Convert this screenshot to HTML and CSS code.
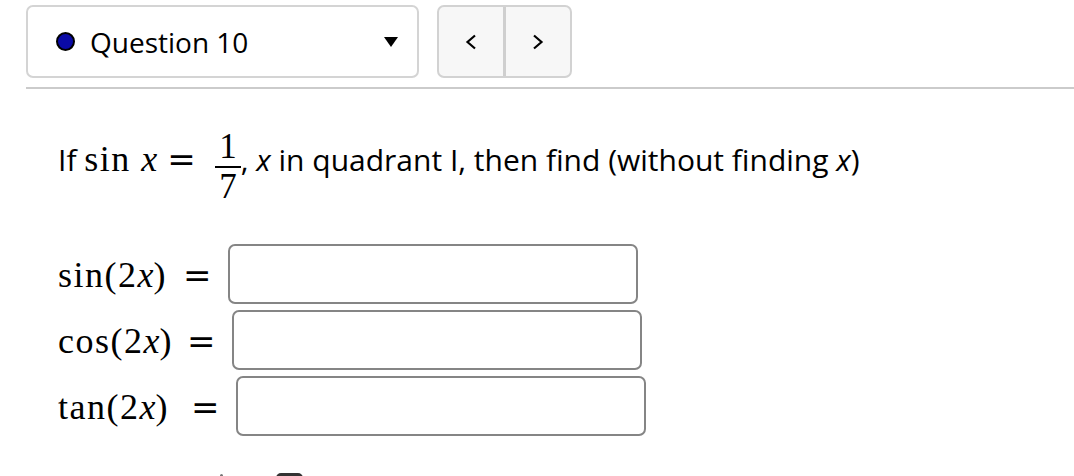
FILE: index.html
```html
<!DOCTYPE html>
<html lang="en">
<head>
<meta charset="utf-8">
<title>Question 10</title>
<link rel="stylesheet" href="styles.css">
</head>
<body>
<div class="page">
  <div class="toolbar">
    <div class="qselect">
      <span class="dot"></span>
      <span class="qlabel">Question 10</span>
      <span class="caret"></span>
    </div>
    <div class="nav">
      <span class="navbtn">
        <svg width="12" height="16" viewBox="0 0 12 16"><polyline points="10,1.5 2.5,8 10,14.5" fill="none" stroke="#000" stroke-width="2.2" stroke-linejoin="miter"/></svg>
      </span>
      <span class="navdiv"></span>
      <span class="navbtn">
        <svg width="12" height="16" viewBox="0 0 12 16"><polyline points="2,1.5 9.5,8 2,14.5" fill="none" stroke="#000" stroke-width="2.2" stroke-linejoin="miter"/></svg>
      </span>
    </div>
  </div>
  <div class="rule"></div>

  <div class="question">
    <p class="prompt">If <span class="math"><span class="mrm">sin</span> <span class="mit">x</span><span class="meq">=</span><span class="frac"><span class="num">1</span><span class="bar"></span><span class="den">7</span></span></span>, <i>x</i> in quadrant I, then find (without finding <i>x</i>)</p>

    <div class="answers">
      <div class="row">
        <span class="math lbl-sin"><span class="mrm">sin</span>(2<span class="mit">x</span>)</span>
        <span class="meq">=</span>
        <span class="box"></span>
      </div>
      <div class="row">
        <span class="math lbl-cos"><span class="mrm">cos</span>(2<span class="mit">x</span>)</span>
        <span class="meq">=</span>
        <span class="box"></span>
      </div>
      <div class="row">
        <span class="math lbl-tan"><span class="mrm">tan</span>(2<span class="mit">x</span>)</span>
        <span class="meq">=</span>
        <span class="box"></span>
      </div>
    </div>

    <div class="helprow">
      <span class="helpdot"></span>
      <span class="helpicon"></span>
    </div>
  </div>
</div>
</body>
</html>
```

FILE: styles.css
```css
html, body {
  margin: 0;
  padding: 0;
  background: #fff;
}

body {
  font-family: "Open Sans", "Noto Sans", sans-serif;
  color: #000;
  width: 1074px;
  height: 476px;
  overflow: hidden;
}

.toolbar {
  display: flex;
  gap: 18px;
  padding: 5px 0 0 26px;
}

.qselect {
  box-sizing: border-box;
  width: 393px;
  height: 73px;
  border: 2px solid #d4d4d4;
  border-radius: 7px;
  display: flex;
  align-items: center;
  padding-left: 28px;
  padding-right: 19px;
}

.dot {
  box-sizing: border-box;
  width: 19px;
  height: 19px;
  border-radius: 50%;
  background: #0a0aa6;
  border: 2px solid #000;
  flex: none;
}

.qlabel {
  margin-left: 15px;
  font-size: 28px;
  line-height: 1;
}

.caret {
  margin-left: auto;
  width: 0;
  height: 0;
  border-left: 7px solid transparent;
  border-right: 7px solid transparent;
  border-top: 10px solid #000;
}

.nav {
  box-sizing: border-box;
  width: 135px;
  height: 73px;
  border: 2px solid #d2d2d2;
  border-radius: 7px;
  background: #f7f7f7;
  display: grid;
  grid-template-columns: 64px 3px 64px;
}

.navbtn {
  display: flex;
  align-items: center;
  justify-content: center;
}

.navdiv {
  background: #cfcfcf;
}

.rule {
  margin: 9px 0 0 26px;
  height: 2px;
  background: #cbcbcb;
}

.question {
  padding-left: 58px;
}

.prompt {
  margin: 43px 0 0 0;
  font-size: 30px;
  line-height: 40px;
}

.prompt i {
  font-style: italic;
}

.math {
  font-family: "Liberation Serif", "Times New Roman", serif;
  font-size: 36px;
  letter-spacing: 1.5px;
}

.mrm {
  font-style: normal;
}

.mit {
  font-style: italic;
  letter-spacing: 0;
}

.meq {
  font-family: "DejaVu Serif", serif;
  font-size: 34px;
  margin: 0 10px 0 10px;
}

.frac {
  display: inline-block;
  vertical-align: -27px;
  text-align: center;
  font-size: 35px;
  letter-spacing: 0;
  margin-left: 8px;
}

.num {
  display: block;
  line-height: 30px;
  padding: 0 4px 4px;
}

.bar {
  display: block;
  height: 2px;
  background: #000;
}

.den {
  display: block;
  line-height: 30px;
  padding: 4px 4px 0;
}

.answers {
  margin-top: 42px;
  display: flex;
  flex-direction: column;
  gap: 6px;
}

.row {
  display: flex;
  align-items: center;
}

.row .math {
  line-height: 41px;
  padding-top: 3px;
}

.lbl-sin { width: 111px; }
.lbl-cos { width: 115px; }
.lbl-tan { width: 119px; }

.row .meq {
  margin: 0 16px 0 14px;
  line-height: 41px;
  padding-top: 3px;
}

.box {
  box-sizing: border-box;
  width: 410px;
  height: 60px;
  border: 2px solid #858585;
  border-radius: 7px;
  background: #fff;
}

.helprow {
  margin-top: 37px;
  display: flex;
  align-items: flex-start;
  padding-left: 162px;
  height: 10px;
}

.helpdot {
  width: 3px;
  height: 3px;
  border-radius: 50%;
  background: #777;
  margin-top: 1px;
}

.helpicon {
  margin-left: 53px;
  width: 27px;
  height: 10px;
  border-radius: 5px;
  background: #333;
}
```
